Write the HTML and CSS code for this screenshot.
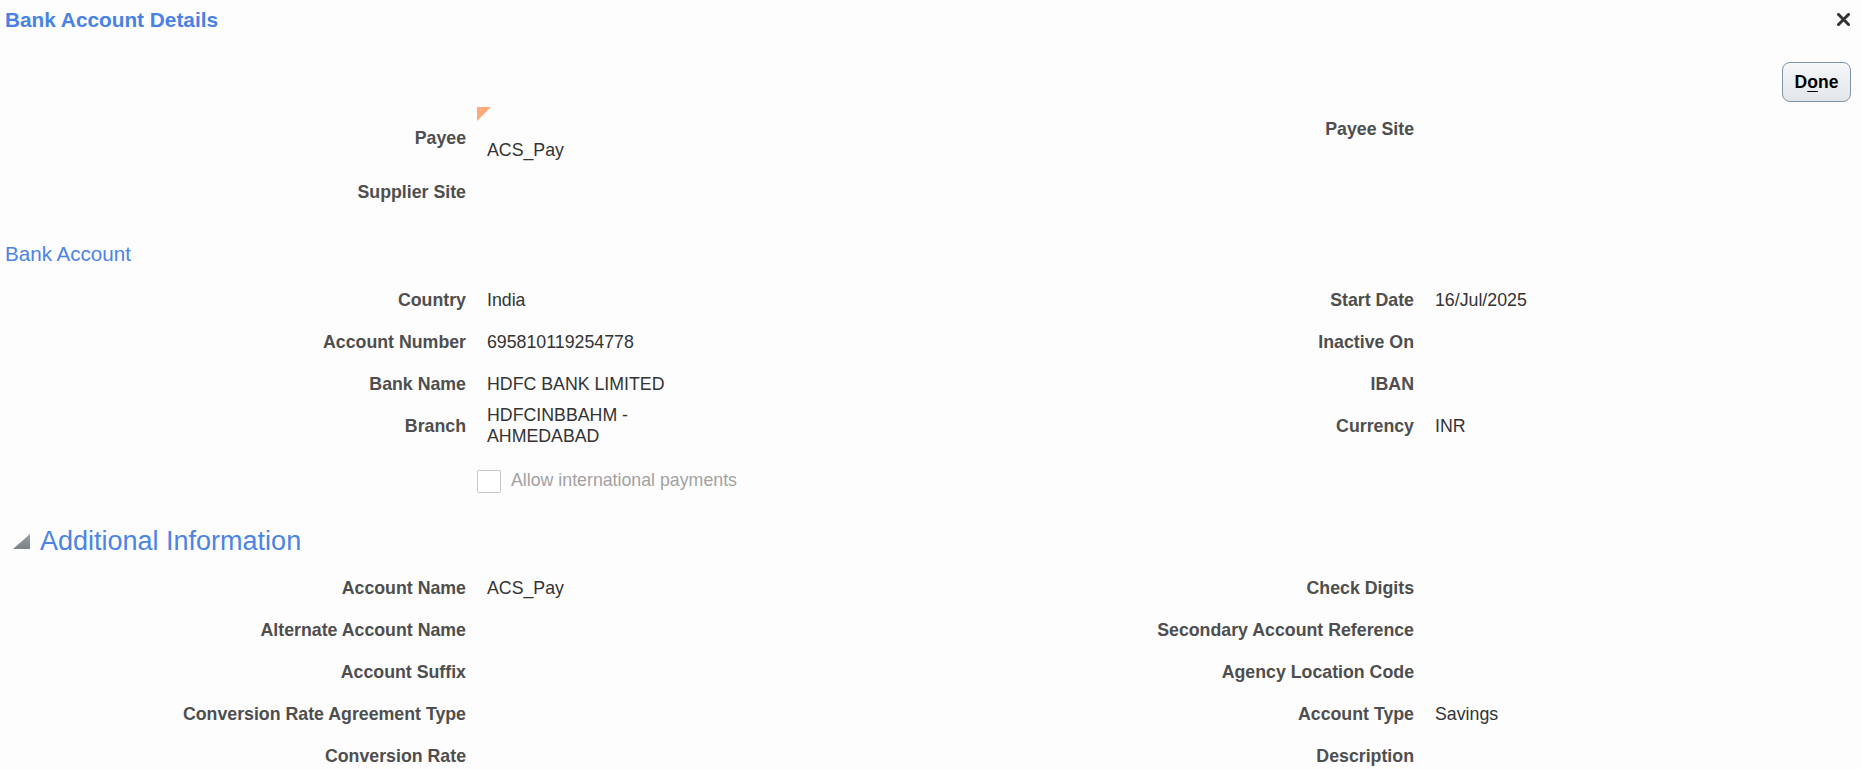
FILE: index.html
```html
<!DOCTYPE html>
<html lang="en">
<head>
<meta charset="utf-8">
<title>Bank Account Details</title>
<link rel="stylesheet" href="styles.css">
</head>
<body>
<div class="dialog">
  <header class="dlg-header">
    <h1 class="dlg-title">Bank Account Details</h1>
    <button class="close" aria-label="Close">
      <svg width="13" height="13" viewBox="0 0 13 13"><path d="M1.5 1.5 L11.5 11.5 M11.5 1.5 L1.5 11.5" stroke="#333" stroke-width="3" stroke-linecap="square" fill="none"/></svg>
    </button>
  </header>

  <div class="toolbar">
    <button class="btn">D<u>o</u>ne</button>
  </div>

  <div class="form form-top">
    <div class="lbl lbl-top">Payee</div>
    <div class="val val-changed"><span class="changed"></span><span class="val-text">ACS_Pay</span></div>
    <div class="lbl lbl-top lbl-site">Payee Site</div>
    <div class="val"></div>

    <div class="lbl">Supplier Site</div>
    <div class="val"></div>
    <div class="lbl"></div>
    <div class="val"></div>
  </div>

  <h2 class="section-title">Bank Account</h2>

  <div class="form form-bank">
    <div class="lbl">Country</div>
    <div class="val">India</div>
    <div class="lbl">Start Date</div>
    <div class="val">16/Jul/2025</div>

    <div class="lbl">Account Number</div>
    <div class="val">695810119254778</div>
    <div class="lbl">Inactive On</div>
    <div class="val"></div>

    <div class="lbl">Bank Name</div>
    <div class="val">HDFC BANK LIMITED</div>
    <div class="lbl">IBAN</div>
    <div class="val"></div>

    <div class="lbl">Branch</div>
    <div class="val val-wrap">HDFCINBBAHM - AHMEDABAD</div>
    <div class="lbl">Currency</div>
    <div class="val">INR</div>

    <div class="lbl"></div>
    <div class="check-cell">
      <label class="check">
        <span class="check-box"></span>
        <span class="check-text">Allow international payments</span>
      </label>
    </div>
  </div>

  <h2 class="disclosure">
    <svg class="disc-icon" width="17" height="15" viewBox="0 0 17 15"><defs><linearGradient id="dg" x1="0" y1="0" x2="0" y2="1"><stop offset="0" stop-color="#9aa0a5"/><stop offset="1" stop-color="#7a8187"/></linearGradient></defs><polygon points="0,15 17,15 17,0" fill="url(#dg)"/></svg>
    <span>Additional Information</span>
  </h2>

  <div class="form form-add">
    <div class="lbl">Account Name</div>
    <div class="val">ACS_Pay</div>
    <div class="lbl">Check Digits</div>
    <div class="val"></div>

    <div class="lbl">Alternate Account Name</div>
    <div class="val"></div>
    <div class="lbl">Secondary Account Reference</div>
    <div class="val"></div>

    <div class="lbl">Account Suffix</div>
    <div class="val"></div>
    <div class="lbl">Agency Location Code</div>
    <div class="val"></div>

    <div class="lbl">Conversion Rate Agreement Type</div>
    <div class="val"></div>
    <div class="lbl">Account Type</div>
    <div class="val">Savings</div>

    <div class="lbl">Conversion Rate</div>
    <div class="val"></div>
    <div class="lbl">Description</div>
    <div class="val"></div>
  </div>
</div>
</body>
</html>
```

FILE: styles.css
```css
html, body {
  margin: 0;
  padding: 0;
  background: #fdfdfd;
  overflow: hidden;
}

body {
  font-family: "Liberation Sans", Arial, Helvetica, sans-serif;
  color: #333333;
}

.dialog {
  display: flex;
  flex-direction: column;
}

.dlg-header {
  display: flex;
  justify-content: space-between;
  align-items: flex-start;
  padding: 8px 11px 0 5px;
}

.dlg-title {
  margin: 0;
  font-size: 20.8px;
  line-height: 24px;
  font-weight: bold;
  color: #4a82e3;
}

.close {
  margin: 5px 0 0 0;
  padding: 0;
  border: 0;
  background: none;
  width: 13px;
  height: 13px;
  display: block;
}

.close svg {
  display: block;
}

.toolbar {
  display: flex;
  justify-content: flex-end;
  padding-right: 10px;
  margin-top: 30px;
}

.btn {
  height: 40px;
  width: 69px;
  border: 1px solid #7f93a7;
  border-radius: 8px;
  background: linear-gradient(#f5f7f9, #e2e6ea);
  font-family: "Liberation Sans", Arial, sans-serif;
  font-size: 17.5px;
  font-weight: bold;
  color: #000;
  padding: 0;
}

.btn u {
  text-decoration-thickness: 1px;
  text-underline-offset: 3px;
}

.form {
  display: grid;
  grid-template-columns: 466px 200px 706px 1fr;
  column-gap: 21px;
  grid-auto-rows: minmax(42px, auto);
  align-items: center;
  font-size: 17.75px;
  line-height: 21px;
}

.form-top {
  margin-top: 5px;
  grid-template-rows: 64px 42px;
}

.form-bank {
  margin-top: 13px;
}

.form-add {
  margin-top: 11px;
  grid-auto-rows: 41.8px;
}

.lbl {
  text-align: right;
  font-weight: bold;
  color: #4e4e4e;
  white-space: nowrap;
}

.val {
  color: #333333;
  white-space: nowrap;
}

.val-wrap {
  white-space: normal;
}

.lbl-top {
  align-self: start;
  padding-top: 21px;
}

.lbl-site {
  padding-top: 12px;
}

.val-changed {
  align-self: start;
  display: flex;
  flex-direction: column;
  align-items: flex-start;
}

.changed {
  width: 0;
  height: 0;
  margin-left: -10px;
  border-top: 14px solid #fdab78;
  border-right: 14px solid transparent;
}

.val-text {
  margin-top: 19px;
}

.section-title {
  margin: 29px 0 0 5px;
  font-size: 20.6px;
  line-height: 24px;
  font-weight: normal;
  color: #4c84e4;
}

.check-cell {
  grid-column: 2 / span 3;
  align-self: start;
  padding-top: 23px;
  margin-left: -10px;
}

.check {
  display: flex;
  align-items: flex-start;
  gap: 10px;
}

.check-box {
  box-sizing: border-box;
  width: 24px;
  height: 23px;
  border: 1px solid #c8c8c8;
  border-radius: 2px;
  background: #ffffff;
}

.check-text {
  color: #a2a2a2;
  font-size: 17.75px;
  line-height: 21px;
  margin-top: 0;
  white-space: nowrap;
}

.disclosure {
  margin: 33px 0 0 0;
  padding-left: 13px;
  display: flex;
  align-items: center;
  gap: 10px;
  font-size: 27px;
  line-height: 31px;
  font-weight: normal;
  color: #4c84e4;
}

.disc-icon {
  display: block;
}
```
